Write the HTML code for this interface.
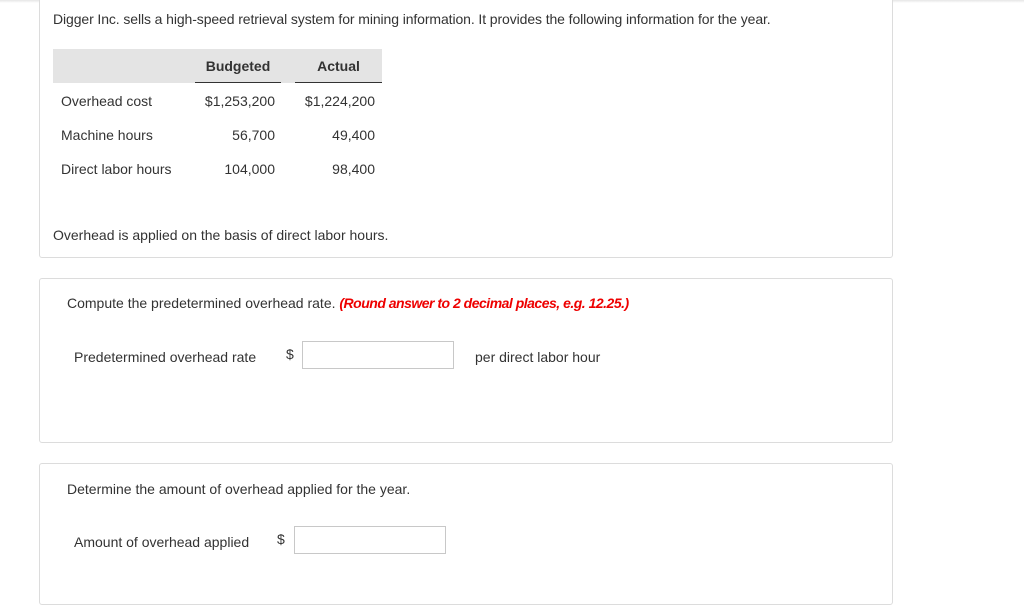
<!DOCTYPE html>
<html><head><style>
body{margin:0;background:#fff;font-family:"Liberation Sans",sans-serif;font-size:14px;color:#333;width:1024px;height:590px;overflow:hidden;position:relative}
.card{position:absolute;left:39px;width:852px;border:1px solid #dcdcdc;border-radius:3px;background:#fff}
.t{position:absolute;white-space:nowrap}
.r{text-align:right}
.inp{position:absolute;border:1px solid #c8c8c8;height:26px;background:#fff}
</style></head><body>
<div style="position:absolute;left:0;top:0;width:1024px;height:3px;background:linear-gradient(#e6e6e6,#fff)"></div>
<div class="card" style="top:-5px;height:261px"></div>
<div class="card" style="top:278px;height:163px"></div>
<div class="card" style="top:463px;height:140px"></div>
<div class="t" style="left:53px;top:11px;letter-spacing:-0.1px">Digger Inc. sells a high-speed retrieval system for mining information. It provides the following information for the year.</div>
<div style="position:absolute;left:53px;top:49px;width:329px;height:34px;background:#e4e4e4"></div>
<div style="position:absolute;left:195px;top:82px;width:86px;height:1px;background:#333"></div>
<div style="position:absolute;left:295px;top:82px;width:87px;height:1px;background:#333"></div>
<div class="t" style="left:195px;width:86px;top:58px;text-align:center;font-weight:bold">Budgeted</div>
<div class="t" style="left:295px;width:87px;top:58px;text-align:center;font-weight:bold">Actual</div>
<div class="t" style="left:61px;top:93px">Overhead cost</div>
<div class="t r" style="left:180px;width:95px;top:93px">$1,253,200</div>
<div class="t r" style="left:280px;width:95px;top:93px">$1,224,200</div>
<div class="t" style="left:61px;top:127px">Machine hours</div>
<div class="t r" style="left:180px;width:95px;top:127px">56,700</div>
<div class="t r" style="left:280px;width:95px;top:127px">49,400</div>
<div class="t" style="left:61px;top:161px">Direct labor hours</div>
<div class="t r" style="left:180px;width:95px;top:161px">104,000</div>
<div class="t r" style="left:280px;width:95px;top:161px">98,400</div>
<div class="t" style="left:53px;top:227px">Overhead is applied on the basis of direct labor hours.</div>
<div class="t" style="left:67px;top:295px">Compute the predetermined overhead rate. <b style="color:#e00;font-style:italic;letter-spacing:-0.5px">(Round answer to 2 decimal places, e.g. 12.25.)</b></div>
<div class="t" style="left:74px;top:349px">Predetermined overhead rate</div>
<div class="t" style="left:286px;top:346px">$</div>
<div class="inp" style="left:302px;top:341px;width:150px"></div>
<div class="t" style="left:475px;top:349px">per direct labor hour</div>
<div class="t" style="left:67px;top:481px">Determine the amount of overhead applied for the year.</div>
<div class="t" style="left:74px;top:534px">Amount of overhead applied</div>
<div class="t" style="left:277px;top:531px">$</div>
<div class="inp" style="left:294px;top:526px;width:150px"></div>
</body></html>
